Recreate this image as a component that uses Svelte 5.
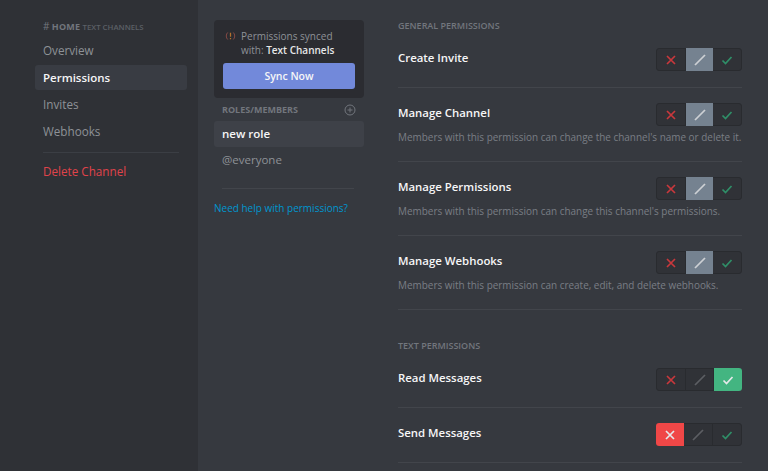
<script>
  const general = [
    { name: 'Create Invite', state: 'neutral' },
    { name: 'Manage Channel', desc: "Members with this permission can change the channel's name or delete it.", state: 'neutral' },
    { name: 'Manage Permissions', desc: "Members with this permission can change this channel's permissions.", state: 'neutral' },
    { name: 'Manage Webhooks', desc: 'Members with this permission can create, edit, and delete webhooks.', state: 'neutral' },
  ];
  const text = [
    { name: 'Read Messages', state: 'allow' },
    { name: 'Send Messages', state: 'deny' },
  ];
</script>

{#snippet toggle(state)}
  <div class="toggle">
    <div class="cell deny" class:on={state === 'deny'}>
      <svg width="12" height="12" viewBox="0 0 12 12"><path d="M2 2l8 8M10 2l-8 8" /></svg>
    </div>
    <div class="cell neutral" class:on={state === 'neutral'}>
      <svg width="14" height="14" viewBox="0 0 14 14"><path d="M2 12L12 2" /></svg>
    </div>
    <div class="cell allow" class:on={state === 'allow'}>
      <svg width="12" height="12" viewBox="0 0 12 12"><path d="M1.5 6.5l3 3 6-6.5" /></svg>
    </div>
  </div>
{/snippet}

{#snippet row(perm)}
  <div class="perm">
    <div class="perm-top">
      <span class="perm-name">{perm.name}</span>
      {@render toggle(perm.state)}
    </div>
    {#if perm.desc}
      <div class="perm-desc">{perm.desc}</div>
    {/if}
  </div>
{/snippet}

<div class="page">
  <aside class="sidebar">
    <div class="side-head"><span class="hash">#</span> <b>HOME</b> <span class="sub">TEXT CHANNELS</span></div>
    <div class="side-item">Overview</div>
    <div class="side-item active">Permissions</div>
    <div class="side-item">Invites</div>
    <div class="side-item">Webhooks</div>
    <div class="side-sep"></div>
    <div class="side-item danger">Delete Channel</div>
  </aside>

  <section class="roles">
    <div class="sync">
      <div class="sync-text">
        <svg class="sync-icon" width="11" height="10" viewBox="0 0 14 12">
          <path class="arc" d="M3.5 1.5C1 3.5 1 8.5 3.5 10.5" />
          <path class="arc" d="M10.5 1.5C13 3.5 13 8.5 10.5 10.5" />
          <path class="bang" d="M7 2v5M7 8.5v1.5" />
        </svg>
        <span>Permissions synced<br />with: <b>Text Channels</b></span>
      </div>
      <div class="sync-btn">Sync Now</div>
    </div>
    <div class="roles-head">
      <span>ROLES/MEMBERS</span>
      <svg width="12" height="12" viewBox="0 0 12 12">
        <circle cx="6" cy="6" r="5" />
        <path d="M6 3.5v5M3.5 6h5" />
      </svg>
    </div>
    <div class="role active">new role</div>
    <div class="role">@everyone</div>
    <div class="roles-sep"></div>
    <div class="help">Need help with permissions?</div>
  </section>

  <main class="content">
    <h2>GENERAL PERMISSIONS</h2>
    {#each general as perm}
      {@render row(perm)}
    {/each}
    <h2 class="second">TEXT PERMISSIONS</h2>
    {#each text as perm}
      {@render row(perm)}
    {/each}
  </main>
</div>

<style>
  :global(body) {
    margin: 0;
    background: #36393f;
  }

  .page {
    display: flex;
    width: 768px;
    height: 471px;
    overflow: hidden;
    background: #36393f;
    font-family: "Open Sans", "Noto Sans", sans-serif;
  }

  .sidebar {
    flex: 0 0 198px;
    box-sizing: border-box;
    padding: 20px 11px 0 35px;
    background: #2f3136;
  }

  .side-head {
    height: 12px;
    padding-left: 8px;
    margin-bottom: 6px;
    font-size: 9px;
    line-height: 12px;
    color: #72767d;
    white-space: nowrap;
  }

  .hash {
    font-size: 10px;
  }

  .side-head b {
    font-weight: 700;
    letter-spacing: 0.2px;
  }

  .sub {
    font-size: 7.8px;
    font-weight: 600;
    color: #5c6066;
  }

  .side-item {
    height: 25px;
    margin-bottom: 2px;
    padding-left: 8px;
    border-radius: 3px;
    font-size: 11.7px;
    line-height: 25px;
    font-weight: 500;
    color: #8e9297;
  }

  .side-item.active {
    background: #393c43;
    color: #f6f6f7;
    font-weight: 550;
    font-size: 11.5px;
  }

  .side-item.danger {
    color: #e0434b;
  }

  .side-sep {
    height: 1px;
    margin: 8px 8px 6px;
    background: #3b3e44;
  }

  .roles {
    flex: 0 0 200px;
    box-sizing: border-box;
    padding: 20px 34px 0 16px;
  }

  .sync {
    box-sizing: border-box;
    height: 78px;
    padding: 9px 9px 0;
    border-radius: 4px;
    background: #2b2c31;
  }

  .sync-text {
    display: flex;
    gap: 5px;
    height: 34px;
    padding-left: 2px;
    font-size: 10px;
    line-height: 14px;
    color: #8e9297;
    white-space: nowrap;
  }

  .sync-text b {
    color: #e6e7e8;
    font-weight: 600;
  }

  .sync-icon {
    flex: none;
    margin-top: 2px;
  }

  .arc {
    fill: none;
    stroke: #8a4a45;
    stroke-width: 1.2;
  }

  .bang {
    fill: none;
    stroke: #b3702d;
    stroke-width: 1.6;
  }

  .sync-btn {
    height: 26px;
    border-radius: 3px;
    background: #7289da;
    color: #f6f6f7;
    font-size: 10.5px;
    font-weight: 550;
    line-height: 26px;
    text-align: center;
  }

  .roles-head {
    display: flex;
    align-items: center;
    justify-content: space-between;
    height: 23px;
    padding: 0 8px;
    font-size: 9px;
    font-weight: 700;
    color: #72767d;
  }

  .roles-head circle,
  .roles-head path {
    fill: none;
    stroke: #72767d;
  }

  .role {
    height: 26px;
    padding-left: 8px;
    border-radius: 3px;
    font-size: 11.5px;
    line-height: 25px;
    font-weight: 500;
    color: #8e9297;
  }

  .role.active {
    background: #3e4148;
    color: #f6f6f7;
    font-weight: 550;
  }

  .roles-sep {
    width: 132px;
    height: 1px;
    margin: 15px 0 12px 8px;
    background: #42454b;
  }

  .help {
    font-size: 10px;
    line-height: 14px;
    color: #0096cf;
    white-space: nowrap;
  }

  .content {
    flex: 1;
    min-width: 0;
    box-sizing: border-box;
    padding: 20px 26px 0 0;
  }

  h2 {
    margin: 0 0 1px;
    font-size: 9px;
    line-height: 12px;
    font-weight: 600;
    color: #72767d;
  }

  h2.second {
    margin-top: 30px;
  }

  .perm {
    padding: 15px 0 16px;
    border-bottom: 1px solid #42454b;
  }

  .perm-top {
    display: flex;
    align-items: flex-start;
    justify-content: space-between;
    height: 23px;
  }

  .perm-name {
    font-size: 11.4px;
    font-weight: 550;
    line-height: 19px;
    color: #f6f6f7;
  }

  .perm-desc {
    margin-top: 4px;
    font-size: 9.95px;
    line-height: 15px;
    color: #7a7e85;
    white-space: nowrap;
  }

  .toggle {
    display: flex;
    box-sizing: border-box;
    width: 86px;
    height: 23px;
    border: 1px solid #292b2f;
    border-radius: 3px;
    background: #303237;
  }

  .cell {
    flex: 1;
    display: flex;
    align-items: center;
    justify-content: center;
    border-right: 1px solid #292b2f;
  }

  .cell:last-child {
    border-right: 0;
  }

  .cell path {
    fill: none;
    stroke-width: 1.7;
  }

  .deny path {
    stroke: #c9383c;
  }

  .neutral path {
    stroke: #5c5e63;
  }

  .allow path {
    stroke: #2f8f68;
  }

  .cell.on {
    margin: -1px 0;
    border-right: 0;
  }

  .deny.on {
    margin-left: -1px;
    border-radius: 3px 0 0 3px;
    background: #f04747;
  }

  .neutral.on {
    background: #758290;
  }

  .allow.on {
    margin-right: -1px;
    border-radius: 0 3px 3px 0;
    background: #43b581;
  }

  .cell.on path {
    stroke: #e6e8ea;
  }

  .neutral.on path {
    stroke: #cdd0d4;
  }
</style>
